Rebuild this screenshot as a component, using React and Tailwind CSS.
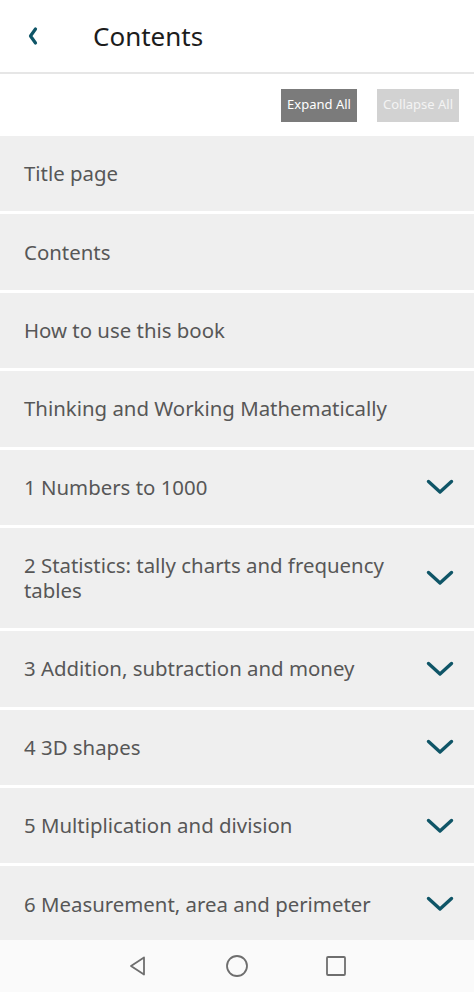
import React from "react";

const items = [
  { t: "Title page" },
  { t: "Contents" },
  { t: "How to use this book" },
  { t: "Thinking and Working Mathematically" },
  { t: "1 Numbers to 1000", c: true },
  { t: "2 Statistics: tally charts and frequency tables", c: true },
  { t: "3 Addition, subtraction and money", c: true },
  { t: "4 3D shapes", c: true },
  { t: "5 Multiplication and division", c: true },
  { t: "6 Measurement, area and perimeter", c: true },
];

function Chevron() {
  return (
    <svg width="28" height="16" viewBox="0 0 28 16" className="shrink-0">
      <path d="M2.5 2.5 L14 13 L25.5 2.5" fill="none" stroke="#0f5567" strokeWidth="3.4" strokeLinecap="round" strokeLinejoin="round" />
    </svg>
  );
}

export default function App() {
  return (
    <div className="w-[474px] h-[992px] bg-white flex flex-col overflow-hidden" style={{ fontFamily: '"Noto Sans", "Open Sans", sans-serif' }}>
      <div className="h-[74px] flex items-center border-b-2 border-[#e6e6e6] shrink-0">
        <svg width="12" height="20" viewBox="0 0 12 20" className="ml-[27px]">
          <path d="M8.5 3 L3.5 10 L8.5 17" fill="none" stroke="#0f5567" strokeWidth="3.2" strokeLinecap="round" strokeLinejoin="round" />
        </svg>
        <div className="ml-[54px] text-[26px] text-[#1c1c1c] leading-none">Contents</div>
      </div>
      <div className="h-[62px] flex items-center justify-end gap-[20px] pr-[15px] shrink-0">
        <div className="h-[33px] w-[76px] bg-[#7b7b7b] text-white text-[13px] flex items-center justify-center">Expand All</div>
        <div className="h-[33px] w-[82px] bg-[#d2d2d2] text-[#f4f4f4] text-[13px] flex items-center justify-center">Collapse All</div>
      </div>
      <div className="flex flex-col gap-[3px] flex-1 overflow-hidden">
        {items.map((it, i) => (
          <div key={i} className="bg-[#efefef] flex items-center justify-between pl-[24px] pr-[20px] py-[25.2px] shrink-0">
            <div className="text-[20.4px] leading-[25px] text-[#575757] pr-[30px]">{it.t}</div>
            {it.c && <Chevron />}
          </div>
        ))}
      </div>
      <div className="h-[52px] bg-[#fafafa] flex items-center justify-center gap-[76px] shrink-0">
        <svg width="22" height="22" viewBox="0 0 22 22">
          <path d="M17 2.5 L4 11 L17 19.5 Z" fill="none" stroke="#6e6e6e" strokeWidth="1.8" strokeLinejoin="round" />
        </svg>
        <svg width="24" height="24" viewBox="0 0 24 24">
          <circle cx="12" cy="12" r="10" fill="none" stroke="#6e6e6e" strokeWidth="1.8" />
        </svg>
        <svg width="22" height="22" viewBox="0 0 22 22">
          <rect x="2" y="2" width="18" height="18" rx="1" fill="none" stroke="#6e6e6e" strokeWidth="1.8" />
        </svg>
      </div>
    </div>
  );
}
